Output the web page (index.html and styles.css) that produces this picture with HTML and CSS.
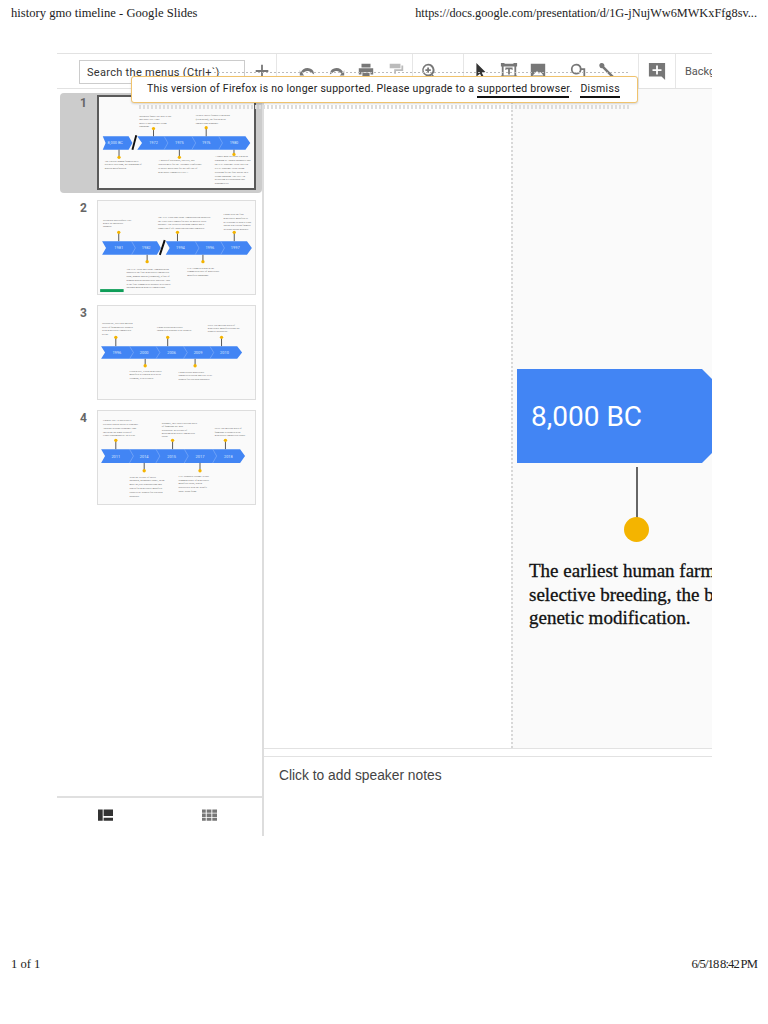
FILE: index.html
```html
<!DOCTYPE html>
<html lang="en">

<head>
  <meta charset="UTF-8">
  <title>history gmo timeline - Google Slides</title>
  <link rel="stylesheet" href="styles.css">
</head>

<body>
  <div class="page">
    <div class="print-line print-head">
      <div>history gmo timeline - Google Slides</div>
      <div class="print-url">https://docs.google.com/presentation/d/1G-jNujWw6MWKxFfg8sv...</div>
    </div>

    <div class="app">
      <div class="toolbar">
        <div class="tb-group tb-search">
          <div class="search-box">Search the menus (Ctrl+`)</div>
          <svg class="icon plus" viewBox="0 0 20 20"><path d="M9 3h2v6h6v2h-6v6H9v-6H3V9h6z" /></svg>
        </div>
        <div class="tb-group tb-history">
          <svg class="icon" viewBox="0 0 20 20"><path d="M3 12c2-6 10-7 14-2l1 4-3-2c-3-3-7-3-10 1l2 2H2V9z" /></svg>
          <svg class="icon" viewBox="0 0 20 20"><path d="M17 12C15 6 7 5 3 10l-1 4 3-2c3-3 7-3 10 1l-2 2h5V9z" /></svg>
          <svg class="icon" viewBox="0 0 20 20"><path d="M5 2h10v4H5zM2 7h16v7h-3v-3H5v3H2zM6 12h8v6H6z" /></svg>
          <svg class="icon faint" viewBox="0 0 20 20"><path d="M3 2h12v5H3zM16 4h2v6h-8v3H8V8h8z" /></svg>
        </div>
        <div class="tb-group tb-zoom">
          <svg class="icon" viewBox="0 0 20 20"><path fill-rule="evenodd" d="M9 2a7 7 0 0 1 5 12l4 4-1 1-4-4A7 7 0 1 1 9 2zm0 2a5 5 0 1 0 0 10A5 5 0 0 0 9 4zM8 6h2v2h2v2h-2v2H8v-2H6V8h2z" /></svg>
        </div>
        <div class="tb-group tb-tools">
          <svg class="icon dark" viewBox="0 0 20 20"><path d="M6 1l10 10-4 1 3 6-2 1-3-6-4 3z" /></svg>
          <svg class="icon" viewBox="0 0 20 20"><path fill-rule="evenodd" d="M1 1h4v1h10V1h4v4h-1v10h1v4h-4v-1H5v1H1v-4h1V5H1zm3 4v10h12V5zM6 6h8v3h-1V8h-2v6H9V8H7v1H6z" /></svg>
          <svg class="icon" viewBox="0 0 20 20"><path fill-rule="evenodd" d="M2 2h16v16H2zM4 15h12l-3-4-2 2-2-3z" /></svg>
          <svg class="icon shape" viewBox="0 0 20 20"><path fill-rule="evenodd" d="M8 2a6 6 0 0 1 6 5h4v10h-2V9h-2a6 6 0 1 1-6-7zm0 2a4 4 0 1 0 0 8 4 4 0 0 0 0-8z" /></svg>
          <svg class="icon" viewBox="0 0 20 20"><path d="M4 1a3 3 0 0 1 3 4l11 11-2 2L5 7a3 3 0 0 1-1-6z" /></svg>
        </div>
        <div class="tb-group tb-comment">
          <svg class="icon" viewBox="0 0 20 20"><path fill-rule="evenodd" d="M1 1h18v19l-4-4H1zm8 3v4H5v2h4v4h2v-4h4V8h-4V4z" /></svg>
        </div>
        <div class="tb-group tb-background">Background</div>
      </div>

      <div class="workspace">
        <div class="film">
          <div class="film-list">
            <div class="film-item selected">
              <div class="film-num">1</div>
              <svg class="thumb" viewBox="0 0 158 95">
                <polygon class="band" points="2,41 29,41 33,48 29,55 2,55 5,48" />
                <polygon class="band" points="38,41 151,41 156,48 151,55 38,55 43,48" />
                <polyline class="sep" points="66,41 70,48 66,55" />
                <polyline class="sep" points="95,41 99,48 95,55" />
                <polyline class="sep" points="123,41 127,48 123,55" />
                <line class="slash" x1="37" y1="40" x2="33" y2="55" />
                <line class="stem" x1="55" y1="33" x2="55" y2="41" /><circle class="pin" cx="55" cy="33" r="1.7" />
                <line class="stem" x1="110" y1="32" x2="110" y2="41" /><circle class="pin" cx="110" cy="32" r="1.7" />
                <line class="stem" x1="19" y1="55" x2="19" y2="63" /><circle class="pin" cx="19" cy="63" r="1.7" />
                <line class="stem" x1="82" y1="55" x2="82" y2="63" /><circle class="pin" cx="82" cy="63" r="1.7" />
                <line class="stem" x1="139" y1="55" x2="139" y2="60" /><circle class="pin" cx="139" cy="60" r="1.7" />
                <text class="yr" x="15" y="49.5">8,000 BC</text>
                <text class="yr" x="55" y="49.5">1972</text>
                <text class="yr" x="82" y="49.5">1975</text>
                <text class="yr" x="110" y="49.5">1976</text>
                <text class="yr" x="139" y="49.5">1980</text>
                <text class="tx">
                  <tspan x="40" y="21">Scientists figure out how to cut</tspan>
                  <tspan x="40" y="24.5">and paste DNA and</tspan>
                  <tspan x="40" y="28">insert it into another living</tspan>
                  <tspan x="40" y="31.5">organism.</tspan>
                </text>
                <text class="tx">
                  <tspan x="99" y="20">Herbert Boyer founds Genentech</tspan>
                  <tspan x="99" y="24">(Genentech), the first genetic</tspan>
                  <tspan x="99" y="28.5">engineering company.</tspan>
                </text>
                <text class="tx">
                  <tspan x="4" y="68">The earliest human farmers used</tspan>
                  <tspan x="4" y="71.5">selective breeding, the beginning of</tspan>
                  <tspan x="4" y="75">genetic modification.</tspan>
                </text>
                <text class="tx">
                  <tspan x="60" y="67">A group of biologists, lawyers, and</tspan>
                  <tspan x="60" y="71">doctors meet for the Asilomar Conference</tspan>
                  <tspan x="60" y="75">to create guidelines for the safe use of</tspan>
                  <tspan x="60" y="79">genetically engineered DNA.</tspan>
                </text>
                <text class="tx">
                  <tspan x="119" y="63">A sandy man develops a genetic</tspan>
                  <tspan x="119" y="67">organism at Ananda Mankurty and</tspan>
                  <tspan x="119" y="71">the U.S. Supreme Court ruled in</tspan>
                  <tspan x="119" y="75">a U.S. Supreme Court ruling</tspan>
                  <tspan x="119" y="79">allowing for the first patent on a</tspan>
                  <tspan x="119" y="83">living organism. The DNA in</tspan>
                  <tspan x="119" y="87">petroleum is a biocarbon that</tspan>
                  <tspan x="119" y="91">consumes oil.</tspan>
                </text>
              </svg>
            </div>

            <div class="film-item">
              <div class="film-num">2</div>
              <svg class="thumb" viewBox="0 0 158 95">
                <polygon class="band" points="3,41 59,41 63,48 59,55 3,55 7,48" />
                <polygon class="band" points="68,41 151,41 156,48 151,55 68,55 72,48" />
                <polyline class="sep" points="33,41 37,48 33,55" />
                <polyline class="sep" points="98,41 102,48 98,55" />
                <polyline class="sep" points="124,41 128,48 124,55" />
                <line class="slash" x1="67" y1="40" x2="62" y2="55" />
                <line class="stem" x1="20" y1="32" x2="20" y2="41" /><circle class="pin" cx="20" cy="32" r="1.7" />
                <line class="stem" x1="80" y1="32" x2="80" y2="41" /><circle class="pin" cx="80" cy="32" r="1.7" />
                <line class="stem" x1="138" y1="32" x2="138" y2="41" /><circle class="pin" cx="138" cy="32" r="1.7" />
                <line class="stem" x1="49" y1="55" x2="49" y2="62" /><circle class="pin" cx="49" cy="62" r="1.7" />
                <line class="stem" x1="106" y1="55" x2="106" y2="62" /><circle class="pin" cx="106" cy="62" r="1.7" />
                <text class="yr" x="20" y="49.5">1981</text>
                <text class="yr" x="48" y="49.5">1982</text>
                <text class="yr" x="83" y="49.5">1994</text>
                <text class="yr" x="113" y="49.5">1996</text>
                <text class="yr" x="139" y="49.5">1997</text>
                <text class="tx">
                  <tspan x="4" y="20">Scientists successfully edit</tspan>
                  <tspan x="4" y="23.5">genes in laboratory</tspan>
                  <tspan x="4" y="27">animals.</tspan>
                </text>
                <text class="tx">
                  <tspan x="60" y="17">The U.S. Food and Drug Administration approves</tspan>
                  <tspan x="60" y="21">the Flavr Savr tomato for sale as grocery store</tspan>
                  <tspan x="60" y="25">produce. The delayed-ripening tomato has a</tspan>
                  <tspan x="60" y="28.5">longer shelf life than conventional tomatoes.</tspan>
                </text>
                <text class="tx">
                  <tspan x="127" y="14">China sells the first</tspan>
                  <tspan x="127" y="18">genetically modified to</tspan>
                  <tspan x="127" y="22">be resistant to both a virus</tspan>
                  <tspan x="127" y="26">which was cotton farmers</tspan>
                  <tspan x="127" y="30">in crops across globally.</tspan>
                </text>
                <text class="tx">
                  <tspan x="28" y="70">The U.S. Food and Drug Administration</tspan>
                  <tspan x="28" y="74">approves the first genetically engineered</tspan>
                  <tspan x="28" y="78">drug, human insulin (Humulin), a first of</tspan>
                  <tspan x="28" y="82">human insulin produced by bacteria. This</tspan>
                  <tspan x="28" y="85.5">is the first commercial product developed</tspan>
                  <tspan x="28" y="89">through modern genetic engineering.</tspan>
                </text>
                <text class="tx">
                  <tspan x="90" y="69">U.S. Farmers begin in the</tspan>
                  <tspan x="90" y="73">commercial sale of genetically</tspan>
                  <tspan x="90" y="77">modified organisms.</tspan>
                </text>
                <rect class="progress" x="1" y="90" width="24" height="3" />
              </svg>
            </div>

            <div class="film-item">
              <div class="film-num">3</div>
              <svg class="thumb" viewBox="0 0 158 95">
                <polygon class="band" points="2,41 141,41 146,47.5 141,54 2,54 6,47.5" />
                <polyline class="sep" points="31,41 35,47.5 31,54" />
                <polyline class="sep" points="58,41 62,47.5 58,54" />
                <polyline class="sep" points="86,41 90,47.5 86,54" />
                <polyline class="sep" points="113,41 117,47.5 113,54" />
                <line class="stem" x1="17" y1="32" x2="17" y2="41" /><circle class="pin" cx="17" cy="32" r="1.7" />
                <line class="stem" x1="70" y1="32" x2="70" y2="41" /><circle class="pin" cx="70" cy="32" r="1.7" />
                <line class="stem" x1="125" y1="32" x2="125" y2="41" /><circle class="pin" cx="125" cy="32" r="1.7" />
                <line class="stem" x1="47" y1="54" x2="47" y2="61" /><circle class="pin" cx="47" cy="61" r="1.7" />
                <line class="stem" x1="98" y1="54" x2="98" y2="61" /><circle class="pin" cx="98" cy="61" r="1.7" />
                <text class="yr" x="18" y="49">1996</text>
                <text class="yr" x="46" y="49">2000</text>
                <text class="yr" x="74" y="49">2006</text>
                <text class="yr" x="101" y="49">2009</text>
                <text class="yr" x="128" y="49">2010</text>
                <text class="tx">
                  <tspan x="3" y="18">Worldwide, over 200 million</tspan>
                  <tspan x="3" y="22">acres of farmland are planted</tspan>
                  <tspan x="3" y="26">with genetically engineered</tspan>
                  <tspan x="3" y="29.5">seeds.</tspan>
                </text>
                <text class="tx">
                  <tspan x="59" y="22">China allows genetically</tspan>
                  <tspan x="59" y="25.5">engineered poplars to be planted.</tspan>
                </text>
                <text class="tx">
                  <tspan x="111" y="20">Over 100 million acres of</tspan>
                  <tspan x="111" y="23.5">genetically modified crops are</tspan>
                  <tspan x="111" y="27">planted worldwide.</tspan>
                </text>
                <text class="tx">
                  <tspan x="31" y="67">Golden rice, a crop genetically</tspan>
                  <tspan x="31" y="71">modified to contain beta-keep</tspan>
                  <tspan x="31" y="75">vitamins, is developed.</tspan>
                </text>
                <text class="tx">
                  <tspan x="81" y="68">China allows genetically</tspan>
                  <tspan x="81" y="72">engineered cotton and rice to be</tspan>
                  <tspan x="81" y="75.5">planted for research purposes.</tspan>
                </text>
              </svg>
            </div>

            <div class="film-item">
              <div class="film-num">4</div>
              <svg class="thumb" viewBox="0 0 158 95">
                <polygon class="band" points="2,39 144,39 149,46 144,53 2,53 6,46" />
                <polyline class="sep" points="31,39 35,46 31,53" />
                <polyline class="sep" points="58,39 62,46 58,53" />
                <polyline class="sep" points="87,39 91,46 87,53" />
                <polyline class="sep" points="116,39 120,46 116,53" />
                <line class="stem" x1="17" y1="30" x2="17" y2="39" /><circle class="pin" cx="17" cy="30" r="1.7" />
                <line class="stem" x1="75" y1="30" x2="75" y2="39" /><circle class="pin" cx="75" cy="30" r="1.7" />
                <line class="stem" x1="129" y1="30" x2="129" y2="39" /><circle class="pin" cx="129" cy="30" r="1.7" />
                <line class="stem" x1="46" y1="53" x2="46" y2="61" /><circle class="pin" cx="46" cy="61" r="1.7" />
                <line class="stem" x1="103" y1="53" x2="103" y2="61" /><circle class="pin" cx="103" cy="61" r="1.7" />
                <text class="yr" x="17" y="47.5">2011</text>
                <text class="yr" x="46" y="47.5">2014</text>
                <text class="yr" x="74" y="47.5">2015</text>
                <text class="yr" x="103" y="47.5">2017</text>
                <text class="yr" x="132" y="47.5">2018</text>
                <text class="tx">
                  <tspan x="4" y="10">China's 300+ 5 acres plot a</tspan>
                  <tspan x="4" y="14">released which called to continue</tspan>
                  <tspan x="4" y="18">"healthy-second-economy" and</tspan>
                  <tspan x="4" y="22">threatens the high yields of</tspan>
                  <tspan x="4" y="25.5">GMO contaminated" in a year.</tspan>
                </text>
                <text class="tx">
                  <tspan x="64" y="13">Roughly, they sold a billion acres</tspan>
                  <tspan x="64" y="16.5">of farmland are now</tspan>
                  <tspan x="64" y="20">worldwide as a result of</tspan>
                  <tspan x="64" y="23.5">growing genetically engineered</tspan>
                  <tspan x="64" y="27">crops.</tspan>
                </text>
                <text class="tx">
                  <tspan x="118" y="18">Over 180 million acres of</tspan>
                  <tspan x="118" y="22">farmland is planted with</tspan>
                  <tspan x="118" y="25.5">genetically engineered crops.</tspan>
                </text>
                <text class="tx">
                  <tspan x="31" y="68">With the release of Bitter</tspan>
                  <tspan x="31" y="72">Monarch, Monsanto Dante, Bean</tspan>
                  <tspan x="31" y="76">more 20,000 contributions and</tspan>
                  <tspan x="31" y="80">others for genetically modified</tspan>
                  <tspan x="31" y="84">crops to be planted for research</tspan>
                  <tspan x="31" y="87.5">purposes.</tspan>
                </text>
                <text class="tx">
                  <tspan x="81" y="67">FTC conducts volume to buy</tspan>
                  <tspan x="81" y="71">common study of genetically</tspan>
                  <tspan x="81" y="75">modified crops, which</tspan>
                  <tspan x="81" y="79">discovered with the benefit</tspan>
                  <tspan x="81" y="83">those crops from.</tspan>
                </text>
              </svg>
            </div>
          </div>

          <div class="film-foot">
            <svg class="foot-icon dark" viewBox="0 0 16 12"><path d="M0 0h5v12H0zM6 0h10v7H6zM6 9h10v3H6z" /></svg>
            <svg class="foot-icon" viewBox="0 0 16 12"><path d="M0 0h4v3.5H0zM5 0h5v3.5H5zM11 0h5v3.5h-5zM0 4.5h4V8H0zM5 4.5h5V8H5zM11 4.5h5V8h-5zM0 9h4v3H0zM5 9h5v3H5zM11 9h5v3h-5z" /></svg>
          </div>
        </div>

        <div class="editor">
          <div class="canvas">
            <div class="canvas-blank"></div>
            <div class="slide">
              <div class="year-band">8,000 BC</div>
              <div class="slide-stem"></div>
              <div class="slide-pin"></div>
              <div class="slide-text">The earliest human farmers used<br>selective breeding, the beginning of<br>genetic modification.</div>
            </div>
          </div>
          <div class="notes-gap"></div>
          <div class="notes">Click to add speaker notes</div>
        </div>
      </div>

      <div class="banner">
        This version of Firefox is no longer supported. Please upgrade to a <span class="banner-link">supported browser</span>. <span class="banner-link dismiss">Dismiss</span>
      </div>
    </div>

    <div class="print-line print-foot">
      <div>1 of 1</div>
      <div class="print-date">6/5/18 8:42 PM</div>
    </div>
  </div>
</body>

</html>
```

FILE: styles.css
```css
* {
  box-sizing: border-box;
}

html,
body {
  margin: 0;
  padding: 0;
  background: #fff;
}

.page {
  width: 768px;
  height: 1024px;
  display: flex;
  flex-direction: column;
}

.print-line {
  display: flex;
  justify-content: space-between;
  padding: 0 11px;
  font-family: "Liberation Serif", serif;
  font-size: 12.6px;
  color: #222;
}

.print-url {
  font-size: 12.3px;
}

.print-date {
  letter-spacing: -0.9px;
  word-spacing: -0.5px;
}

.print-head {
  height: 53px;
  padding-top: 6px;
}

.print-foot {
  margin-top: auto;
  height: 24px;
  margin-bottom: 48px;
  padding-top: 5px;
}

.app {
  position: relative;
  margin-left: 57px;
  width: 655px;
  height: 783px;
  overflow: hidden;
  display: flex;
  flex-direction: column;
  font-family: Roboto, sans-serif;
}

/* toolbar */
.toolbar {
  flex: none;
  height: 36px;
  display: flex;
  border-top: 1px solid #e2e2e2;
  border-bottom: 1px solid #e2e2e2;
}

.tb-group {
  flex: none;
  display: flex;
  align-items: flex-start;
  padding-top: 8px;
  border-right: 1px solid #e6e6e6;
}

.tb-search {
  width: 220px;
  padding: 6px 0 0 22px;
}

.search-box {
  width: 166px;
  height: 24px;
  padding: 5px 7px;
  border: 1px solid #ccc;
  font-size: 11px;
  letter-spacing: 0.3px;
  color: #333;
  white-space: nowrap;
}

.plus {
  margin: 2px 0 0 7px;
}

.tb-history {
  width: 136px;
  padding-left: 20px;
  gap: 9.5px;
}

.tb-zoom {
  width: 51px;
  padding-left: 6px;
}

.tb-tools {
  width: 175px;
  padding-left: 6px;
  gap: 9px;
}

.tb-comment {
  width: 37px;
  padding-left: 8px;
}

.tb-background {
  flex: 1;
  min-width: 0;
  overflow: hidden;
  border-right: 0;
  padding: 11px 0 0 9px;
  font-size: 11px;
  color: #555;
  white-space: nowrap;
}

.icon {
  flex: none;
  width: 20px;
  height: 18px;
  fill: #777;
}

.icon.faint {
  fill: #bbb;
}

.icon.dark {
  fill: #333;
}

.icon.shape {
  margin-left: 11px;
}

/* filmstrip */
.workspace {
  flex: 1;
  display: flex;
  min-height: 0;
}

.film {
  flex: none;
  width: 207px;
  display: flex;
  flex-direction: column;
  border-right: 2px solid #ddd;
}

.film-list {
  flex: 1;
  padding: 4px 0 0 3px;
  display: flex;
  flex-direction: column;
  gap: 5px;
}

.film-item {
  display: flex;
  height: 100px;
  width: 202px;
  padding: 2px 0 0 20px;
  border-radius: 4px;
}

.film-item.selected {
  background: #ccc;
}

.film-num {
  width: 17px;
  padding-top: 1px;
  font-size: 12px;
  font-weight: 700;
  color: #666;
}

.thumb {
  flex: none;
  width: 159px;
  height: 95px;
  background: #fafafa;
  border: 1.5px solid #ddd;
}

.selected .thumb {
  border: 2px solid #5a5a5a;
}

.band {
  fill: #4285f4;
}

.sep {
  fill: none;
  stroke: #8ab4f8;
  stroke-width: 0.6;
}

.slash {
  stroke: #111;
  stroke-width: 2;
}

.stem {
  stroke: #555;
  stroke-width: 1;
}

.pin {
  fill: #f4b400;
}

.progress {
  fill: #0f9d58;
}

.yr {
  font-family: Roboto, sans-serif;
  font-size: 4px;
  text-anchor: middle;
  fill: #dbe7fd;
}

.tx {
  font-family: "Liberation Serif", serif;
  font-size: 2.7px;
  fill: #555;
}

.film-foot {
  flex: none;
  height: 40px;
  display: flex;
  padding: 11px 0 0 41px;
  gap: 89px;
  border-top: 2px solid #e0e0e0;
}

.foot-icon {
  width: 15px;
  height: 12px;
  fill: #777;
}

.foot-icon.dark {
  fill: #333;
}

/* slide area */
.editor {
  flex: 1;
  min-width: 0;
  display: flex;
  flex-direction: column;
}

.canvas {
  flex: none;
  height: 660px;
  display: flex;
  border-bottom: 1px solid #e2e2e2;
}

.canvas-blank {
  flex: none;
  width: 247px;
}

.slide {
  flex: 1;
  min-width: 0;
  overflow: hidden;
  padding-top: 280px;
  background: #fafafa;
  border-left: 2px dotted #d8d8d8;
}

.year-band {
  margin-left: 4px;
  height: 94px;
  padding-left: 14px;
  display: flex;
  align-items: center;
  background: #4285f4;
  color: #fff;
  font-size: 28px;
  clip-path: polygon(0 0, calc(100% - 10px) 0, 100% 10px, 100% calc(100% - 10px), calc(100% - 10px) 100%, 0 100%);
}

.slide-stem {
  margin: 4px 0 0 123px;
  width: 1.5px;
  height: 51px;
  background: #666;
}

.slide-pin {
  margin: -1px 0 0 111px;
  width: 25px;
  height: 25px;
  border-radius: 50%;
  background: #f4b400;
}

.slide-text {
  margin: 17px 0 0 16px;
  font-family: "Liberation Serif", serif;
  font-size: 19px;
  line-height: 23.5px;
  color: #111;
  -webkit-text-stroke: 0.3px #111;
  white-space: nowrap;
}

.notes-gap {
  flex: none;
  height: 8px;
  border-bottom: 1px solid #e2e2e2;
}

.notes {
  padding: 11px 15px;
  font-family: "Liberation Sans", sans-serif;
  font-size: 13.8px;
  color: #444;
}

/* upgrade message, sits over the toolbar */
.banner {
  position: absolute;
  left: 74px;
  top: 23px;
  width: 507px;
  height: 27px;
  padding: 5px 15px;
  background: #fff;
  border: 1px solid #f0c36d;
  border-radius: 3px;
  box-shadow: 0 1px 2px rgba(0, 0, 0, 0.15);
  font-size: 10.5px;
  letter-spacing: 0.28px;
  color: #222;
  white-space: nowrap;
}

.banner::before {
  content: "";
  position: absolute;
  left: 82px;
  right: 8px;
  top: -5px;
  height: 1px;
  background: repeating-linear-gradient(90deg, #bbb 0 2px, transparent 2px 4px);
}

.banner::after {
  content: "";
  position: absolute;
  left: 7px;
  right: 8px;
  top: 28px;
  height: 4px;
  background: repeating-linear-gradient(90deg, #ddd 0 2px, transparent 2px 4px);
}

.banner-link {
  padding-bottom: 1px;
  border-bottom: 2px solid #111;
}

.dismiss {
  margin-left: 5px;
}
```
